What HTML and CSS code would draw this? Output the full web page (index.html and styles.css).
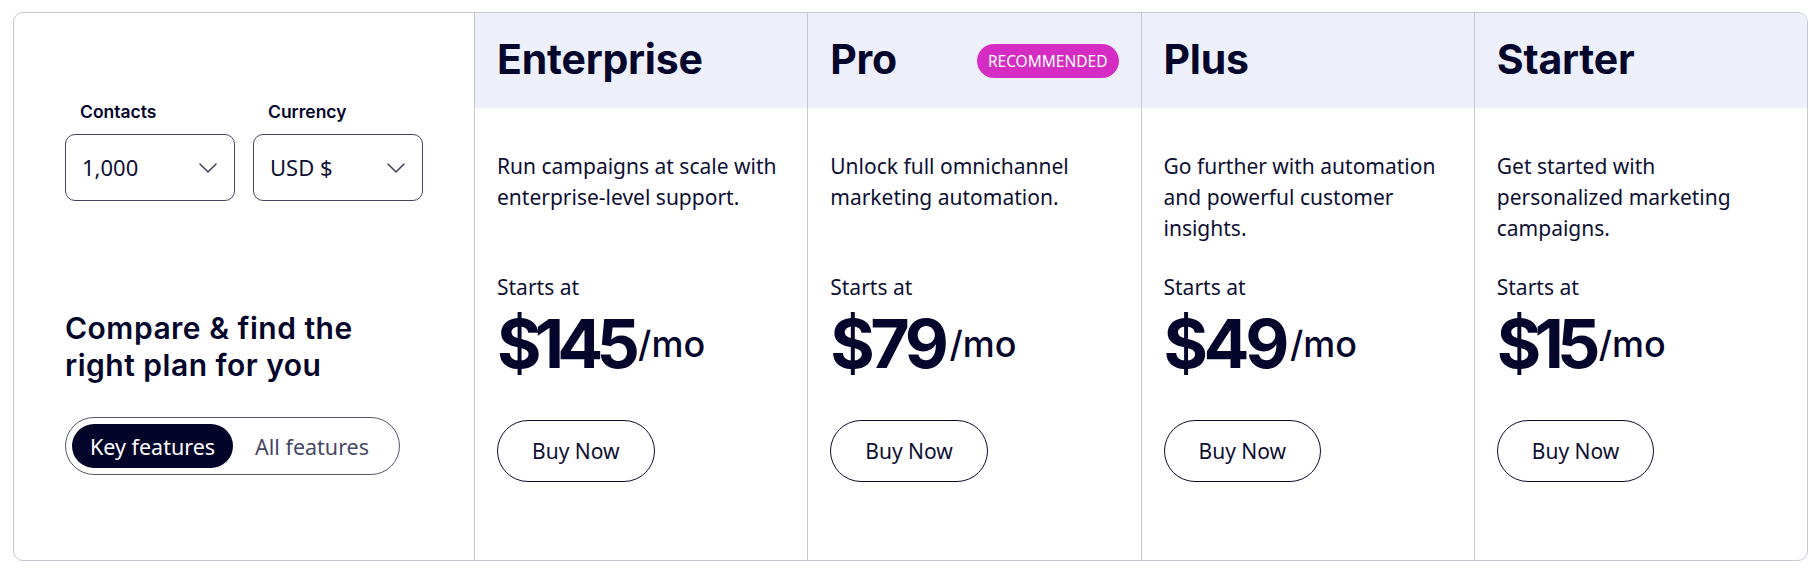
FILE: index.html
```html
<!DOCTYPE html>
<html lang="en">
<head>
<meta charset="utf-8">
<title>Compare plans</title>
<link rel="stylesheet" href="styles.css">
</head>
<body>
<div class="card">
  <aside class="intro">
    <div class="filters">
      <div class="field">
        <span class="field-label">Contacts</span>
        <div class="select">
          <span>1,000</span>
          <svg class="chev" width="18" height="10" viewBox="0 0 18 10"><path d="M1 1l8 8 8-8" fill="none" stroke="#44465f" stroke-width="1.6" stroke-linecap="round" stroke-linejoin="round"/></svg>
        </div>
      </div>
      <div class="field">
        <span class="field-label">Currency</span>
        <div class="select">
          <span>USD $</span>
          <svg class="chev" width="18" height="10" viewBox="0 0 18 10"><path d="M1 1l8 8 8-8" fill="none" stroke="#44465f" stroke-width="1.6" stroke-linecap="round" stroke-linejoin="round"/></svg>
        </div>
      </div>
    </div>
    <h2 class="intro-title">Compare &amp; find the<br>right plan for you</h2>
    <div class="toggle">
      <button class="toggle-btn active">Key features</button>
      <button class="toggle-btn">All features</button>
    </div>
  </aside>

  <section class="plan">
    <header class="plan-head"><h3 class="plan-name">Enterprise</h3></header>
    <div class="plan-body">
      <p class="plan-desc">Run campaigns at scale with enterprise-level support.</p>
      <p class="starts">Starts at</p>
      <p class="price"><span class="amount amount-tight">$145</span><span class="per">/mo</span></p>
      <a class="buy" href="#">Buy Now</a>
    </div>
  </section>

  <section class="plan">
    <header class="plan-head"><h3 class="plan-name">Pro</h3><span class="badge">RECOMMENDED</span></header>
    <div class="plan-body">
      <p class="plan-desc">Unlock full omnichannel marketing automation.</p>
      <p class="starts">Starts at</p>
      <p class="price"><span class="amount">$79</span><span class="per">/mo</span></p>
      <a class="buy" href="#">Buy Now</a>
    </div>
  </section>

  <section class="plan">
    <header class="plan-head"><h3 class="plan-name">Plus</h3></header>
    <div class="plan-body">
      <p class="plan-desc">Go further with automation and powerful customer insights.</p>
      <p class="starts">Starts at</p>
      <p class="price"><span class="amount">$49</span><span class="per">/mo</span></p>
      <a class="buy" href="#">Buy Now</a>
    </div>
  </section>

  <section class="plan">
    <header class="plan-head"><h3 class="plan-name">Starter</h3></header>
    <div class="plan-body">
      <p class="plan-desc">Get started with personalized marketing campaigns.</p>
      <p class="starts">Starts at</p>
      <p class="price"><span class="amount amount-tight">$15</span><span class="per">/mo</span></p>
      <a class="buy" href="#">Buy Now</a>
    </div>
  </section>
</div>
</body>
</html>
```
FILE: styles.css
```css
* { box-sizing: border-box; }

html, body { background: #ffffff; }

body {
  margin: 0;
  padding: 12px 9px 0 13px;
  font-family: "Noto Sans", "Open Sans", sans-serif;
  color: #0d0f33;
}

.card {
  display: flex;
  height: 549px;
  border: 1px solid #c6c6d5;
  border-radius: 10px;
  overflow: hidden;
  background: #ffffff;
}

/* left intro column */
.intro {
  flex: none;
  width: 460px;
  padding: 88px 0 0 51px;
}

.filters {
  display: flex;
  gap: 18px;
}

.field {
  display: flex;
  flex-direction: column;
  width: 170px;
}

.field-label {
  font-family: Inter, "Noto Sans", sans-serif;
  font-weight: 600;
  font-size: 17.5px;
  line-height: 21px;
  padding-left: 15px;
  margin-bottom: 12px;
  color: #05062c;
}

.select {
  height: 67px;
  border: 1px solid #44465f;
  border-radius: 10px;
  display: flex;
  align-items: center;
  justify-content: space-between;
  padding: 0 17px 2px 16px;
  font-size: 22px;
  color: #0d0f33;
}

.chev { display: block; margin-top: 2px; }

.intro-title {
  margin: 109px 0 0;
  font-family: Inter, "Noto Sans", sans-serif;
  font-weight: 600;
  font-size: 30px;
  line-height: 37px;
  letter-spacing: 0.5px;
  color: #05062c;
}

.toggle {
  margin-top: 33px;
  display: flex;
  width: fit-content;
  gap: 4px;
  padding: 6px 12px 6px 6px;
  border: 1px solid #55576f;
  border-radius: 30px;
}

.toggle-btn {
  height: 44px;
  padding: 0 18px;
  border: 0;
  border-radius: 22px;
  background: transparent;
  font-family: "Noto Sans", sans-serif;
  font-size: 21.5px;
  color: #464864;
  cursor: pointer;
}

.toggle-btn.active {
  background: #03042a;
  color: #ffffff;
}

/* plan columns */
.plan {
  flex: 1 1 0;
  min-width: 0;
  border-left: 1px solid #c6c6d5;
  display: flex;
  flex-direction: column;
}

.plan-head {
  height: 95px;
  background: #edf0fa;
  display: flex;
  align-items: center;
  justify-content: space-between;
  padding: 0 22px 2px;
}

.plan-name {
  margin: 0;
  font-family: Inter, "Noto Sans", sans-serif;
  font-weight: 700;
  font-size: 41px;
  line-height: 1.2;
  letter-spacing: -0.005em;
  color: #05062c;
}

.badge {
  height: 34px;
  padding: 0 11px;
  border-radius: 17px;
  background: #d52cc3;
  color: #ffffff;
  font-size: 15.5px;
  line-height: 34px;
  margin-top: 2px;
}

.plan-body {
  padding: 43px 22px 0;
}

.plan-desc {
  margin: 0 0 28px;
  max-width: 284px;
  height: 93px;
  font-size: 21px;
  line-height: 31px;
}

.starts {
  margin: 0 0 6px;
  font-size: 21px;
  line-height: 31px;
}

.price {
  margin: 0;
  font-family: Inter, "Noto Sans", sans-serif;
  font-size: 68px;
  line-height: 68px;
  color: #05062c;
  white-space: nowrap;
}

.amount {
  font-weight: 700;
  letter-spacing: -0.065em;
}

.amount-tight {
  letter-spacing: -0.1em;
}

.per {
  font-size: 36px;
  line-height: 1;
  font-weight: 500;
  margin-left: 5px;
  vertical-align: 11.5px;
}

.buy {
  display: inline-flex;
  align-items: center;
  height: 62px;
  margin-top: 43px;
  padding: 0 34px;
  border: 1px solid #0a0b2c;
  border-radius: 31px;
  font-size: 21px;
  color: #0d0f33;
  text-decoration: none;
}
```
